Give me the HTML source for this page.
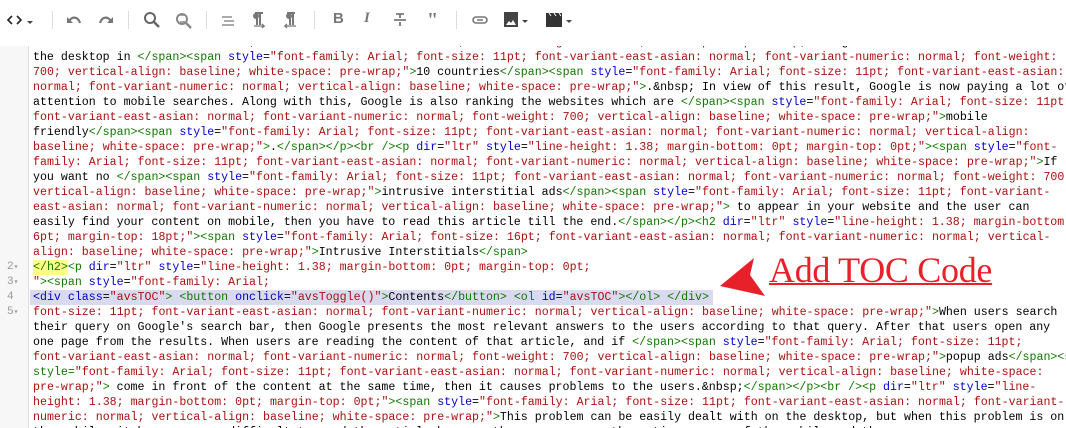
<!DOCTYPE html>
<html><head><meta charset="utf-8">
<style>
html,body{margin:0;padding:0;width:1066px;height:428px;overflow:hidden;background:#fff;font-family:"Liberation Sans",sans-serif}
#tb{position:absolute;left:0;top:0;width:1066px;height:40px}
.ic{position:absolute;top:10px}
.sep{position:absolute;top:11px;width:1px;height:18px;background:#ddd}
#ed{position:absolute;left:0;top:46px;width:1066px;height:382px;overflow:hidden}
#gut{position:absolute;left:0;top:0;width:28px;height:400px;background:#f7f7f7;border-right:1px solid #ddd}
#code{position:absolute;left:33px;top:-11px;font-family:"Liberation Mono",monospace;font-size:11.62px;line-height:15px;white-space:pre;color:#000}
#code div{height:15px}
.t{color:#170}.a{color:#00c}.s{color:#a11}
.ln{position:absolute;left:7px;font-family:"Liberation Mono",monospace;font-size:11px;color:#999;line-height:15px}
</style></head><body>
<div id="tb">
<svg class="ic" style="left:4px" width="32" height="20" viewBox="0 0 32 20"><path d="M8 6 L4 10 L8 14 M13 6 L17 10 L13 14" stroke="#222" stroke-width="1.6" fill="none"/><path d="M23 11 h6 l-3 3z" fill="#444"/></svg>
<div class="sep" style="left:52px"></div>
<svg class="ic" style="left:64px" width="20" height="20" viewBox="0 0 20 20"><path d="M5 12 C7 6 14 6 16 13" stroke="#777" stroke-width="2.2" fill="none"/><path d="M3 7 L3 13 L9 13z" fill="#777"/></svg>
<svg class="ic" style="left:96px" width="20" height="20" viewBox="0 0 20 20"><path d="M15 12 C13 6 6 6 4 13" stroke="#777" stroke-width="2.2" fill="none"/><path d="M17 7 L17 13 L11 13z" fill="#777"/></svg>
<div class="sep" style="left:128px"></div>
<svg class="ic" style="left:142px" width="20" height="20" viewBox="0 0 20 20"><circle cx="8" cy="8" r="5" stroke="#666" stroke-width="2" fill="none"/><path d="M12 12 L17 17" stroke="#666" stroke-width="2.5"/></svg>
<svg class="ic" style="left:174px" width="20" height="20" viewBox="0 0 20 20"><circle cx="8" cy="9" r="5" stroke="#888" stroke-width="2" fill="none"/><path d="M12 13 L17 18" stroke="#888" stroke-width="2.5"/><path d="M5 5 L11 5 M6 12 L11 12" stroke="#888" stroke-width="1.5"/></svg>
<div class="sep" style="left:206px"></div>
<svg class="ic" style="left:218px" width="20" height="20" viewBox="0 0 20 20"><path d="M4 7h10M6 11h10M4 15h12" stroke="#777" stroke-width="1.2"/></svg>
<svg class="ic" style="left:250px" width="20" height="20" viewBox="0 0 20 20"><path d="M5 3h8M7 3v12M10 3v12" stroke="#777" stroke-width="2"/><circle cx="6" cy="6" r="3" fill="#777"/><path d="M4 16h10l-2-2M14 16l-2 2" stroke="#777" stroke-width="1.3" fill="none"/></svg>
<svg class="ic" style="left:280px" width="20" height="20" viewBox="0 0 20 20"><path d="M7 3h8M10 3v12M13 3v12" stroke="#777" stroke-width="2"/><circle cx="9" cy="6" r="3" fill="#777"/><path d="M16 16H5l2-2M5 16l2 2" stroke="#777" stroke-width="1.3" fill="none"/></svg>
<div class="sep" style="left:314px"></div>
<div class="ic" style="left:333px;top:10px;font:bold 15px 'Liberation Sans';color:#777">B</div>
<div class="ic" style="left:364px;top:10px;font:italic bold 15px 'Liberation Serif';color:#777">I</div>
<svg class="ic" style="left:390px" width="20" height="20" viewBox="0 0 20 20"><path d="M4 10h12M6 4h8M10 4v4M10 12v4" stroke="#777" stroke-width="1.8"/></svg>
<div class="ic" style="left:427px;top:9px;font:bold 20px 'Liberation Serif';color:#777;letter-spacing:-1px">"</div>
<div class="sep" style="left:456px"></div>
<svg class="ic" style="left:470px" width="20" height="20" viewBox="0 0 20 20"><rect x="3" y="7" width="14" height="6" rx="3" stroke="#777" stroke-width="1.6" fill="none"/><path d="M7 10h6" stroke="#777" stroke-width="1.5"/></svg>
<svg class="ic" style="left:503px" width="30" height="20" viewBox="0 0 30 20"><rect x="1" y="2" width="14" height="15" fill="#444"/><path d="M3 15 L6 11 L8 13 L10 10 L13 15z" fill="#fff"/><path d="M19 10h6l-3 3z" fill="#444"/></svg>
<svg class="ic" style="left:545px" width="30" height="20" viewBox="0 0 30 20"><rect x="1" y="5" width="16" height="12" fill="#333"/><path d="M1 3h16v3H1z" fill="#333"/><path d="M4 3l2 3M9 3l2 3M14 3l2 3" stroke="#fff" stroke-width="1"/><path d="M21 10h6l-3 3z" fill="#444"/></svg>
</div>
<div id="ed">
<div id="gut"></div>
<div style="position:absolute;left:30px;top:244px;width:683px;height:15px;background:#d9d9f0"></div>
<div style="position:absolute;left:33px;top:214px;width:35px;height:15px;background:#ffff88"></div>
<div class="ln" style="top:214px">2<span style="font-size:8px">▾</span></div>
<div class="ln" style="top:229px">3<span style="font-size:8px">▾</span></div>
<div class="ln" style="top:244px">4</div>
<div class="ln" style="top:259px">5<span style="font-size:8px">▾</span></div>
<div id="code"></div>
<svg style="position:absolute;left:0;top:0" width="1066" height="382"><path d="M720 240 L754 212 L750 229 L765 250z" fill="#e8202a"/></svg>
<div style="position:absolute;left:769px;top:204px;font-family:'Liberation Serif',serif;font-size:36px;line-height:40px;color:#e8202a;text-decoration:underline;text-decoration-thickness:2px;white-space:nowrap;letter-spacing:-0.3px">Add TOC Code</div>
</div>
<script>
var lines=[
'font-variant-east-asian: normal; font-variant-numeric: normal; vertical-align: baseline; white-space: pre-wrap;">Google has found out that in the',
'the desktop in </span><span style="font-family: Arial; font-size: 11pt; font-variant-east-asian: normal; font-variant-numeric: normal; font-weight:',
'700; vertical-align: baseline; white-space: pre-wrap;">10 countries</span><span style="font-family: Arial; font-size: 11pt; font-variant-east-asian:',
'normal; font-variant-numeric: normal; vertical-align: baseline; white-space: pre-wrap;">.&nbsp; In view of this result, Google is now paying a lot of',
'attention to mobile searches. Along with this, Google is also ranking the websites which are </span><span style="font-family: Arial; font-size: 11pt;',
'font-variant-east-asian: normal; font-variant-numeric: normal; font-weight: 700; vertical-align: baseline; white-space: pre-wrap;">mobile',
'friendly</span><span style="font-family: Arial; font-size: 11pt; font-variant-east-asian: normal; font-variant-numeric: normal; vertical-align:',
'baseline; white-space: pre-wrap;">.</span></p><br /><p dir="ltr" style="line-height: 1.38; margin-bottom: 0pt; margin-top: 0pt;"><span style="font-',
'family: Arial; font-size: 11pt; font-variant-east-asian: normal; font-variant-numeric: normal; vertical-align: baseline; white-space: pre-wrap;">If',
'you want no </span><span style="font-family: Arial; font-size: 11pt; font-variant-east-asian: normal; font-variant-numeric: normal; font-weight: 700;',
'vertical-align: baseline; white-space: pre-wrap;">intrusive interstitial ads</span><span style="font-family: Arial; font-size: 11pt; font-variant-',
'east-asian: normal; font-variant-numeric: normal; vertical-align: baseline; white-space: pre-wrap;"> to appear in your website and the user can',
'easily find your content on mobile, then you have to read this article till the end.</span></p><h2 dir="ltr" style="line-height: 1.38; margin-bottom:',
'6pt; margin-top: 18pt;"><span style="font-family: Arial; font-size: 16pt; font-variant-east-asian: normal; font-variant-numeric: normal; vertical-',
'align: baseline; white-space: pre-wrap;">Intrusive Interstitials</span>',
'</h2><p dir="ltr" style="line-height: 1.38; margin-bottom: 0pt; margin-top: 0pt;',
'"><span style="font-family: Arial;',
'<div class="avsTOC"> <button onclick="avsToggle()">Contents</button> <ol id="avsTOC"></ol> </div>',
'font-size: 11pt; font-variant-east-asian: normal; font-variant-numeric: normal; vertical-align: baseline; white-space: pre-wrap;">When users search',
'their query on Google\'s search bar, then Google presents the most relevant answers to the users according to that query. After that users open any',
'one page from the results. When users are reading the content of that article, and if </span><span style="font-family: Arial; font-size: 11pt;',
'font-variant-east-asian: normal; font-variant-numeric: normal; font-weight: 700; vertical-align: baseline; white-space: pre-wrap;">popup ads</span><span',
'style="font-family: Arial; font-size: 11pt; font-variant-east-asian: normal; font-variant-numeric: normal; vertical-align: baseline; white-space:',
'pre-wrap;"> come in front of the content at the same time, then it causes problems to the users.&nbsp;</span></p><br /><p dir="ltr" style="line-',
'height: 1.38; margin-bottom: 0pt; margin-top: 0pt;"><span style="font-family: Arial; font-size: 11pt; font-variant-east-asian: normal; font-variant-',
'numeric: normal; vertical-align: baseline; white-space: pre-wrap;">This problem can be easily dealt with on the desktop, but when this problem is on',
'the mobile, it becomes very difficult to read the article because the popup covers the entire screen of the mobile and the user'
];
var pre={0:'s',15:'t',16:'s',17:'t',18:'s'};
var st='s',out='',tn=false;
function esc(c){return c=='<'?'&lt;':c=='>'?'&gt;':c=='&'?'&amp;':c}
for(var i=0;i<lines.length;i++){
 if(pre[i]!==undefined){st=pre[i];}
 var L=lines[i],h='';
 for(var j=0;j<L.length;j++){var c=L[j],cls='';
  if(st=='x'){ if(c=='<'){st='t';tn=true;cls='t';} }
  else if(st=='t'){
   if(c=='>'){cls='t';st='x';}
   else if(c=='"'){cls='s';st='s';}
   else if(tn){ if(c==' '){tn=false;} else cls='t'; }
   else if(c=='/'){cls='t';}
   else if(c=='='||c==' '){cls='';}
   else cls='a';
  }
  else if(st=='s'){cls='s'; if(c=='"'){st='t';tn=false;}}
  h+=cls?'<span class="'+cls+'">'+esc(c)+'</span>':esc(c);
 }
 out+='<div>'+h+'</div>';
}
document.getElementById('code').innerHTML=out;
</script>
</body></html>
